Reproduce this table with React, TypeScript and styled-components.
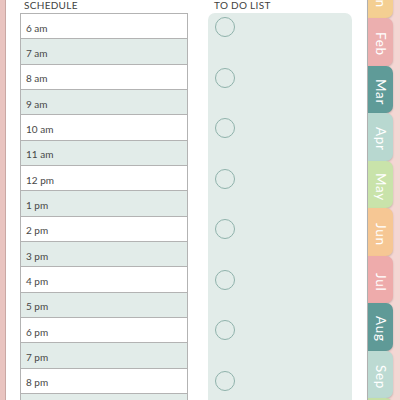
import React from "react";
import styled, { createGlobalStyle } from "styled-components";

const Global = createGlobalStyle`
  html, body { margin: 0; padding: 0; }
  body { width: 400px; height: 400px; overflow: hidden; background: #f4d6d3; font-family: Lato, "Open Sans", sans-serif; }
`;

const Frame = styled.div`
  display: flex;
  width: 400px;
  height: 400px;
  overflow: hidden;
  background: #f4d6d3;
`;

const Spine = styled.div`
  width: 5px;
  flex: none;
  background: #e9c4c0;
  border-right: 1px solid #c9a8a4;
`;

const Page = styled.div`
  width: 362px;
  flex: none;
  background: #ffffff;
  border-right: 1px solid #b9b9b9;
  display: flex;
  align-items: flex-start;
  padding-left: 14px;
  box-sizing: border-box;
`;

const Column = styled.div<{ $w: number; $ml?: number }>`
  width: ${(p) => p.$w}px;
  margin-left: ${(p) => p.$ml ?? 0}px;
  flex: none;
  display: flex;
  flex-direction: column;
`;

const Heading = styled.div<{ $indent: number }>`
  flex: none;
  font-family: Lato, "Open Sans", sans-serif;
  font-size: 10px;
  line-height: 10px;
  height: 13px;
  letter-spacing: 0.3px;
  color: #3f3f3f;
  padding-left: ${(p) => p.$indent}px;
  box-sizing: border-box;
`;

const Table = styled.div`
  flex: none;
  border: 1px solid #b3b3b3;
  border-bottom: none;
  display: flex;
  flex-direction: column;
`;

const Row = styled.div<{ $alt: boolean }>`
  height: 21.33px;
  flex: none;
  border-bottom: 1px solid #b3b3b3;
  background: ${(p) => (p.$alt ? "#e2ece9" : "#ffffff")};
  display: flex;
  align-items: center;
  padding-left: 5px;
  padding-top: 3px;
  box-sizing: content-box;
  font-family: Lato, "Open Sans", sans-serif;
  font-size: 10px;
  color: #474747;
`;

const TodoPanel = styled.div`
  flex: none;
  background: #e2ece9;
  border-radius: 7px;
  height: 420px;
  padding: 4px 0 0 7px;
  display: flex;
  flex-direction: column;
  gap: 30.57px;
`;

const Check = styled.div`
  width: 18px;
  height: 18px;
  border-radius: 50%;
  border: 1px solid #8fb2ab;
  flex: none;
`;

const Tabs = styled.div`
  width: 25px;
  flex: none;
  display: flex;
  flex-direction: column;
  margin-top: -29.5px;
`;

const Tab = styled.div<{ $bg: string }>`
  height: 47.5px;
  flex: none;
  background: ${(p) => p.$bg};
  border-radius: 0 7px 7px 0;
  box-shadow: 0 1px 2px rgba(0, 0, 0, 0.18);
  display: flex;
  align-items: center;
  justify-content: center;
  padding-top: 5px;
  box-sizing: border-box;
  writing-mode: vertical-rl;
  font-family: Lato, "Open Sans", sans-serif;
  font-size: 13.5px;
  letter-spacing: 0.7px;
  color: #ffffff;
`;

const hours = [
  "6 am", "7 am", "8 am", "9 am", "10 am", "11 am", "12 pm", "1 pm",
  "2 pm", "3 pm", "4 pm", "5 pm", "6 pm", "7 pm", "8 pm", "9 pm",
];

const months: [string, string][] = [
  ["Jan", "#f4cf92"],
  ["Feb", "#ecafaf"],
  ["Mar", "#5f9b98"],
  ["Apr", "#b8d8d0"],
  ["May", "#c9e3aa"],
  ["Jun", "#f6c794"],
  ["Jul", "#eeabab"],
  ["Aug", "#5f9a97"],
  ["Sep", "#bcdad2"],
  ["Oct", "#c5e0a6"],
];

export default function App() {
  return (
    <Frame>
      <Global />
      <Spine />
      <Page>
        <Column $w={168}>
          <Heading $indent={4}>SCHEDULE</Heading>
          <Table>
            {hours.map((h, i) => (
              <Row key={h} $alt={i % 2 === 1}>{h}</Row>
            ))}
          </Table>
        </Column>
        <Column $w={144} $ml={20}>
          <Heading $indent={6}>TO DO LIST</Heading>
          <TodoPanel>
            {Array.from({ length: 8 }).map((_, i) => (
              <Check key={i} />
            ))}
          </TodoPanel>
        </Column>
      </Page>
      <Tabs>
        {months.map(([m, c]) => (
          <Tab key={m} $bg={c}>{m}</Tab>
        ))}
      </Tabs>
    </Frame>
  );
}
